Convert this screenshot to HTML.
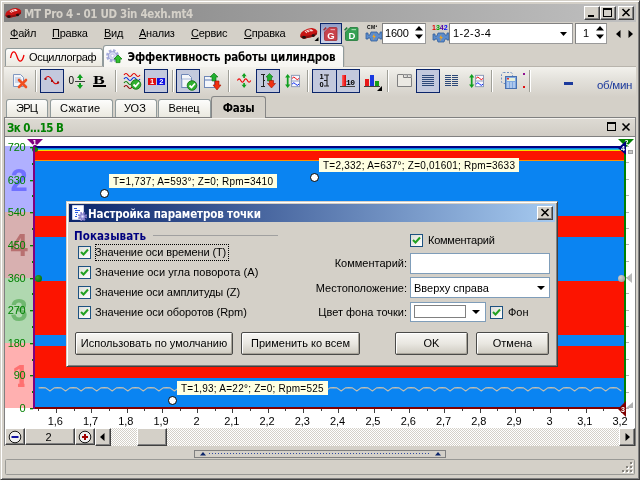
<!DOCTYPE html>
<html><head><meta charset="utf-8"><title>MT Pro 4</title>
<style>
html,body{margin:0;padding:0;}
body{will-change:transform;}
body{width:640px;height:480px;overflow:hidden;background:#d4d0c8;position:relative;font-family:"Liberation Sans",sans-serif;font-size:11px;color:#000;}
.a{position:absolute;}
.t{position:absolute;white-space:nowrap;line-height:14px;height:14px;}
.b{font-family:"DejaVu Sans Condensed","Liberation Sans",sans-serif;font-weight:bold;font-size:11.5px;}
.raised{position:absolute;box-sizing:border-box;background:#d4d0c8;border:1px solid;border-color:#fff #404040 #404040 #fff;box-shadow:inset -1px -1px 0 #808080;}
.sunk{position:absolute;box-sizing:border-box;background:#fff;border:1px solid;border-color:#808080 #9a9a9a #9a9a9a #808080;}
.chk{position:absolute;width:13px;height:13px;box-sizing:border-box;border:1px solid #1c5180;background:linear-gradient(135deg,#dcdcd7,#fff);}
.xpbtn{position:absolute;box-sizing:border-box;border:1px solid #4a4a48;border-radius:2px;background:linear-gradient(#f8f7f4 0%,#e9e7e1 50%,#cfcbc1 100%);text-align:center;line-height:21px;height:23px;box-shadow:inset 1px 1px 0 #fff, inset -1px -1px 0 #a8a49a;}
.sel{position:absolute;box-sizing:border-box;border:1px solid #0a246a;background:#c3c9dd;}
.sep{position:absolute;width:1px;background:#a0a098;box-shadow:1px 0 0 #fff;}
.tab{position:absolute;box-sizing:border-box;border:1px solid #919b9c;border-bottom:none;border-radius:3px 3px 0 0;background:linear-gradient(#fdfdfc,#ebe9e0);}
svg{position:absolute;overflow:visible;}
</style></head><body>
<div class="a" style="left:0;top:0;width:640px;height:480px;box-sizing:border-box;border:1px solid;border-color:#d4d0c8 #404040 #404040 #d4d0c8;box-shadow:inset 1px 1px 0 #fff, inset -1px -1px 0 #808080;"></div>
<div class="a" style="left:4px;top:4px;width:632px;height:18px;background:linear-gradient(90deg,#808080,#c0c0c0);"></div>
<svg style="left:5px;top:7px" width="17" height="13" viewBox="0 0 18 14"><path d="M0.3 7.5 Q1 5 4 3.5 Q8 0.8 12 1 Q16 1.5 17.3 4 L17 7 Q15 9.5 12 10 L5 11.5 Q1 11.5 0.3 9.5Z" fill="#c81414"/><path d="M4.5 4.2 Q8 2 11.5 2.2 L13.5 4 Q9 4.5 6.5 6.2Z" fill="#f4d4d0"/><path d="M6 3.6 L8 6 M8.5 2.8 L10.5 5" stroke="#c81414" stroke-width="0.9"/><path d="M0.5 8.5 Q5 9.5 11 8 L17 5.5 L17 7 Q15 9.5 12 10 L5 11.5 Q1 11.5 0.5 9.5Z" fill="#8c1010"/><ellipse cx="4" cy="10.3" rx="1.9" ry="1.5" fill="#201010"/><ellipse cx="13.3" cy="8.6" rx="1.6" ry="1.4" fill="#201010"/></svg>
<div class="t b" style="left:24px;top:6.5px;color:#d4d0c8;letter-spacing:-0.33px">MT Pro 4 - 01 UD 3in 4exh.mt4</div>
<div class="raised" style="left:584px;top:6px;width:16px;height:14px;"></div>
<div class="raised" style="left:600px;top:6px;width:16px;height:14px;"></div>
<div class="raised" style="left:618px;top:6px;width:16px;height:14px;"></div>
<div class="a" style="left:588px;top:15px;width:6px;height:2px;background:#000"></div>
<div class="a" style="left:603px;top:8px;width:9px;height:9px;box-sizing:border-box;border:1px solid #000;border-top-width:2px"></div>
<svg style="left:622px;top:9px" width="8" height="7" viewBox="0 0 8 7"><path d="M0.5 0 L7.5 7 M7.5 0 L0.5 7" stroke="#000" stroke-width="1.6"/></svg>
<div class="t" style="left:10px;top:26px;letter-spacing:-0.25px"><u>Ф</u>айл</div>
<div class="t" style="left:52px;top:26px;letter-spacing:-0.25px"><u>П</u>равка</div>
<div class="t" style="left:104px;top:26px;letter-spacing:-0.25px"><u>В</u>ид</div>
<div class="t" style="left:139px;top:26px;letter-spacing:-0.25px"><u>А</u>нализ</div>
<div class="t" style="left:191px;top:26px;letter-spacing:-0.25px"><u>С</u>ервис</div>
<div class="t" style="left:244px;top:26px;letter-spacing:-0.25px"><u>С</u>правка</div>
<svg style="left:300px;top:27px" width="18" height="14" viewBox="0 0 18 14"><path d="M0.3 7.5 Q1 5 4 3.5 Q8 0.8 12 1 Q16 1.5 17.3 4 L17 7 Q15 9.5 12 10 L5 11.5 Q1 11.5 0.3 9.5Z" fill="#c81414"/><path d="M4.5 4.2 Q8 2 11.5 2.2 L13.5 4 Q9 4.5 6.5 6.2Z" fill="#f4d4d0"/><path d="M6 3.6 L8 6 M8.5 2.8 L10.5 5" stroke="#c81414" stroke-width="0.9"/><path d="M0.5 8.5 Q5 9.5 11 8 L17 5.5 L17 7 Q15 9.5 12 10 L5 11.5 Q1 11.5 0.5 9.5Z" fill="#8c1010"/><ellipse cx="4" cy="10.3" rx="1.9" ry="1.5" fill="#201010"/><ellipse cx="13.3" cy="8.6" rx="1.6" ry="1.4" fill="#201010"/><path d="M14.5 14 L18.5 14 L18.5 10Z" fill="#000"/></svg>
<div class="sel" style="left:320px;top:23px;width:22px;height:21px;background:linear-gradient(#8f9cc6,#b4bedb 55%,#cdd4e8);"></div>
<svg style="left:323px;top:26px" width="15" height="16" viewBox="0 0 15 16"><path d="M1.5 6 L6 1.5 L13 1.5 Q14 1.5 14 2.5 L14 13.5 Q14 14.5 13 14.5 L2.5 14.5 Q1.5 14.5 1.5 13.5Z" fill="#c8424c" stroke="#a03038" stroke-width="0.8"/><path d="M7.5 3 H12 V4.2 H7.5Z" fill="#e8a0a8"/><path d="M0.6 4.2 L3.2 1.6" stroke="#a03038" stroke-width="1.6"/><text x="8" y="13" font-family="Liberation Sans,sans-serif" font-weight="bold" font-size="9.5" fill="#fff" text-anchor="middle">G</text></svg>
<svg style="left:344px;top:26px" width="15" height="16" viewBox="0 0 15 16"><path d="M1.5 6 L6 1.5 L13 1.5 Q14 1.5 14 2.5 L14 13.5 Q14 14.5 13 14.5 L2.5 14.5 Q1.5 14.5 1.5 13.5Z" fill="#35a052" stroke="#1f7a38" stroke-width="0.8"/><path d="M7.5 3 H12 V4.2 H7.5Z" fill="#9cd8a8"/><path d="M0.6 4.2 L3.2 1.6" stroke="#1f7a38" stroke-width="1.6"/><text x="8" y="13" font-family="Liberation Sans,sans-serif" font-weight="bold" font-size="9.5" fill="#fff" text-anchor="middle">D</text></svg>
<svg style="left:365px;top:30px" width="17" height="12" viewBox="0 0 17 12"><path d="M1 3 L3 3 L3 5 L5 5 L6 2 L12 2 L13 4 L15 4 L15 2 L17 2 L17 9 L15 9 L15 8 L13 8 L12 11 L6 11 L5 8 L3 8 L3 9 L1 9Z" fill="#5c8ccc" stroke="#34609c" stroke-width="0.8"/><path d="M9.3 3.5 L7.3 7 L8.8 7 L7.8 10.5 L10.8 6 L9.3 6Z" fill="#f4a418"/></svg>
<div class="t" style="left:367px;top:20px;font-size:5px;font-weight:bold;letter-spacing:0.3px">CM³</div>
<div class="sunk" style="left:382px;top:23px;width:44px;height:21px;"></div>
<div class="t" style="left:385px;top:26px;font-size:11px;letter-spacing:-0.2px">1600</div>
<svg style="left:415px;top:26px" width="8" height="13" viewBox="0 0 8 13"><path d="M4 0 L8 4.5 L0 4.5Z M0 8.5 L8 8.5 L4 13Z" fill="#000"/></svg>
<svg style="left:432px;top:31px" width="17" height="12" viewBox="0 0 17 12"><path d="M1 3 L3 3 L3 5 L5 5 L6 2 L12 2 L13 4 L15 4 L15 2 L17 2 L17 9 L15 9 L15 8 L13 8 L12 11 L6 11 L5 8 L3 8 L3 9 L1 9Z" fill="#5c8ccc" stroke="#34609c" stroke-width="0.8"/><path d="M9.3 3.5 L7.3 7 L8.8 7 L7.8 10.5 L10.8 6 L9.3 6Z" fill="#f4a418"/></svg>
<div class="t" style="left:432px;top:21px;font-size:7px;font-weight:bold;"><span style="color:#e00000">1</span><span style="color:#00a000">3</span><span style="color:#5000a0">4</span><span style="color:#0000ff">2</span></div>
<div class="sunk" style="left:449px;top:23px;width:124px;height:21px;"></div>
<div class="t" style="left:453px;top:26px;letter-spacing:0.4px">1-2-3-4</div>
<svg style="left:560px;top:32px" width="7" height="4" viewBox="0 0 7 4"><path d="M0 0 L7 0 L3.5 4Z" fill="#000"/></svg>
<div class="sunk" style="left:575px;top:23px;width:32px;height:21px;"></div>
<div class="t" style="left:583px;top:26px;font-size:11px;">1</div>
<svg style="left:596px;top:26px" width="8" height="13" viewBox="0 0 8 13"><path d="M4 0 L8 4.5 L0 4.5Z M0 8.5 L8 8.5 L4 13Z" fill="#000"/></svg>
<svg style="left:616px;top:30px" width="18" height="8" viewBox="0 0 18 8"><path d="M4.5 0 L4.5 8 L0 4Z M12.5 0 L17 4 L12.5 8Z" fill="#000"/></svg>
<div class="a" style="left:4px;top:66px;width:632px;height:30px;background:linear-gradient(#f2f1ec,#e4e2dc 40%,#d4d0c8);border-top:1px solid #b8b4ac;"></div>
<div class="tab" style="left:5px;top:48px;width:98px;height:18px;"></div>
<svg style="left:10px;top:51px" width="15" height="11" viewBox="0 0 15 11"><path d="M0.5 7 C2 -1,5 -1,7 5.5 S12 12,14 4" stroke="#f00000" stroke-width="1.3" fill="none"/></svg>
<div class="t" style="left:29px;top:50px;font-size:11px;letter-spacing:-0.33px">Осциллограф</div>
<div class="tab" style="left:103px;top:45px;width:241px;height:22px;background:linear-gradient(#fefefe,#f6f5f1);box-shadow:1px 0 0 #c8c4bc;"></div>
<svg style="left:106px;top:49px" width="17" height="15" viewBox="0 0 17 15"><circle cx="6.5" cy="6.8" r="5" fill="none" stroke="#a8aede" stroke-width="3" stroke-dasharray="2.4 1.5"/><circle cx="6.5" cy="6.8" r="4.2" fill="#d4d8f2" stroke="#9aa0d4" stroke-width="1"/><circle cx="6.5" cy="6.8" r="1.6" fill="#fff" stroke="#a8aede" stroke-width="0.6"/><path d="M12 6 L16 10 L14 10 L14 13.6 L10 13.6 L10 10 L8 10Z" fill="#30c030" stroke="#108010" stroke-width="0.8"/></svg>
<div class="t b" style="left:127.5px;top:49.5px;letter-spacing:-0.15px">Эффективность работы цилиндров</div>
<div class="sep" style="left:35px;top:70px;height:22px;"></div>
<div class="sep" style="left:115px;top:70px;height:22px;"></div>
<div class="sep" style="left:172px;top:70px;height:22px;"></div>
<div class="sep" style="left:228px;top:70px;height:22px;"></div>
<div class="sep" style="left:307px;top:70px;height:22px;"></div>
<div class="sep" style="left:387px;top:70px;height:22px;"></div>
<div class="sep" style="left:491px;top:70px;height:22px;"></div>
<div class="sep" style="left:529px;top:70px;height:22px;"></div>
<div class="sel" style="left:40px;top:69px;width:24px;height:24px;"></div>
<div class="sel" style="left:144px;top:69px;width:24px;height:24px;"></div>
<div class="sel" style="left:176px;top:69px;width:24px;height:24px;"></div>
<div class="sel" style="left:256px;top:69px;width:24px;height:24px;"></div>
<div class="sel" style="left:312px;top:69px;width:25px;height:24px;"></div>
<div class="sel" style="left:336px;top:69px;width:24px;height:24px;"></div>
<div class="sel" style="left:416px;top:69px;width:24px;height:24px;"></div>
<svg style="left:12px;top:73px" width="16" height="16" viewBox="0 0 16 16"><path d="M1.5 1.5 L8.5 1.5 L11.5 4.5 L11.5 13.5 L1.5 13.5Z" fill="#f4f6fa" stroke="#8098c0"/><path d="M3 5H9M3 7H10M3 9H10" stroke="#a8b8d8"/><path d="M7 7 L14 14 M14 7 L7 14" stroke="#f05020" stroke-width="2.6" stroke-linecap="round"/></svg>
<svg style="left:44px;top:75px" width="16" height="12" viewBox="0 0 16 12"><path d="M1 4 C3 0,6 1,8 5 S12 10,15 7" stroke="#e00000" stroke-width="1.1" fill="none"/><rect x="0.5" y="3" width="2" height="2" fill="#a01010"/><rect x="7" y="5" width="2" height="2" fill="#a01010"/><rect x="13" y="6.5" width="2" height="2" fill="#a01010"/></svg>
<div class="t" style="left:68.5px;top:74px;font-size:10px;">0</div>
<svg style="left:75px;top:74px" width="10" height="15" viewBox="0 0 10 15"><path d="M5 0 L8 4 L6 4 L6 6 L4 6 L4 4 L2 4Z M5 15 L8 11 L6 11 L6 9 L4 9 L4 11 L2 11Z" fill="#10a020"/><path d="M0 7.5 H10" stroke="#404040"/></svg>
<div class="t" style="left:93px;top:72px;font-family:'Liberation Serif',serif;font-weight:bold;font-size:13.5px;line-height:16px;transform:scaleX(1.3);transform-origin:0 0;">B</div>
<div class="a" style="left:93px;top:85px;width:13px;height:2px;background:#000"></div>
<svg style="left:124px;top:72px" width="17" height="18" viewBox="0 0 17 18"><path d="M0 3 Q2 0,4 3 T8 3 T12 3 T16 3" stroke="#e00000" stroke-width="1.2" fill="none"/><path d="M0 7 Q2 4,4 7 T8 7 T12 7 T16 7" stroke="#0030e0" stroke-width="1.2" fill="none"/><path d="M0 11 Q2 8,4 11 T8 11" stroke="#108010" stroke-width="1.2" fill="none"/><path d="M0 15 Q2 12,4 15 T8 15" stroke="#900000" stroke-width="1.2" fill="none"/><circle cx="12" cy="12.5" r="4.8" fill="#30b030" stroke="#107010" stroke-width="0.8"/><path d="M9.5 12.5 L11.5 14.5 L15 10.5" stroke="#fff" stroke-width="1.8" fill="none"/></svg>
<div class="a" style="left:148px;top:78px;width:8px;height:7px;background:#e01010"></div><div class="a" style="left:157px;top:78px;width:8px;height:7px;background:#1010e0"></div>
<div class="t" style="left:148px;top:74.5px;font-size:7.5px;font-weight:bold;color:#fff;letter-spacing:5px;padding-left:2px">12</div>
<svg style="left:180px;top:73px" width="18" height="18" viewBox="0 0 18 18"><path d="M1.5 1.5 L8.5 1.5 L11.5 4.5 L11.5 14.5 L1.5 14.5Z" fill="#f4f6fa" stroke="#7088b8"/><path d="M2 6H11M2 6V14" stroke="#a8b8d8" stroke-width="1"/><circle cx="12" cy="12.5" r="4.8" fill="#30b030" stroke="#107010" stroke-width="0.8"/><path d="M9.5 12.5 L11.5 14.5 L15 10.5" stroke="#fff" stroke-width="1.8" fill="none"/></svg>
<svg style="left:204px;top:73px" width="17" height="18" viewBox="0 0 17 18"><rect x="0.5" y="3.5" width="10" height="11" fill="#f4f6fa" stroke="#7088b8"/><path d="M1 7H10" stroke="#a8b8d8" stroke-width="2"/><path d="M10 0 L14 4 L12 4 L12 8 L8 8 L8 4 L6 4Z" fill="#20b030" stroke="#107010" stroke-width="0.6"/><path d="M13 17 L17 12 L15 12 L15 8 L11 8 L11 12 L9 12Z" fill="#f03010" stroke="#a01000" stroke-width="0.6"/></svg>
<svg style="left:237px;top:73px" width="15" height="15" viewBox="0 0 17 18"><path d="M0 9 Q2 5,4 9 T8 9 T12 9 T16 9" stroke="#f00000" stroke-width="1.3" fill="none"/><path d="M8 0 L11 4 L9 4 L9 6 L7 6 L7 4 L5 4Z M8 18 L11 14 L9 14 L9 12 L7 12 L7 14 L5 14Z" fill="#10a020"/></svg>
<svg style="left:260px;top:73px" width="17" height="16" viewBox="0 0 17 16"><path d="M1 1.5H5M1 13.5H5M3.5 1.5V13.5M3.5 7.5H5" stroke="#202020" stroke-width="1" fill="none"/><path d="M9.5 0.5 L13 4 L11.5 4 L11.5 8 L7.5 8 L7.5 4 L6 4Z" fill="#20b030" stroke="#107010" stroke-width="0.6"/><path d="M11.5 15 L15.5 10.5 L13.5 10.5 L13.5 7.5 L9.5 7.5 L9.5 10.5 L7.5 10.5Z" fill="#f03010" stroke="#a01000" stroke-width="0.6"/></svg>
<svg style="left:284px;top:74px" width="17" height="14" viewBox="0 0 17 16"><path d="M3 0 L6 4 L4 4 L4 12 L6 12 L3 16 L0 12 L2 12 L2 4 L0 4Z" fill="#10a020"/><rect x="7.5" y="1.5" width="9" height="13" fill="#f8f8ff" stroke="#8090b0"/><path d="M8 8H16" stroke="#8090b0"/><path d="M8 5 Q10 2,12 5 T16 5" stroke="#f00000" stroke-width="1.1" fill="none"/><path d="M8 11.5 Q10 8.5,12 11.5 T16 11.5" stroke="#0020f0" stroke-width="1.1" fill="none"/></svg>
<div class="t" style="left:319.5px;top:71px;font-size:7.5px;font-weight:bold;line-height:7.5px;height:18px;padding-top:2px">1<br>0</div>
<svg style="left:324px;top:74px" width="6" height="13" viewBox="0 0 6 13"><path d="M0 1H5M0 12H5M3 1V12M0 6.5H3" stroke="#202020" stroke-width="1.1" fill="none"/></svg>
<div class="a" style="left:342px;top:75px;width:4px;height:11px;background:linear-gradient(90deg,#ff6060,#e00000)"></div>
<div class="a" style="left:340px;top:86px;width:15px;height:1px;background:#404040"></div>
<div class="t" style="left:346px;top:76px;font-size:8px;font-weight:bold;font-family:'Liberation Mono',monospace;letter-spacing:-0.5px">10</div>
<div class="a" style="left:365px;top:79px;width:4px;height:7px;background:#e81818"></div><div class="a" style="left:370px;top:75px;width:4px;height:11px;background:#1838e0"></div><div class="a" style="left:375px;top:81px;width:4px;height:5px;background:#18a018"></div><div class="a" style="left:364px;top:86px;width:16px;height:1px;background:#404040"></div>
<svg style="left:377px;top:86px" width="5" height="5" viewBox="0 0 5 5"><path d="M5 0 L5 5 L0 5Z" fill="#000"/></svg>
<svg style="left:397px;top:74px" width="15" height="13" viewBox="0 0 15 13"><path d="M0.5 12.5 V1 Q0.5 0.5 1 0.5 H6.5 V3.5 H14.5 V12.5Z" fill="#ebe9e3" stroke="#808080"/><path d="M6.5 0.5 H10.5 V3.5 M10.5 0.5 H14 Q14.5 0.5 14.5 1 V3.5" stroke="#909090" fill="#c8c8c8"/></svg>
<svg style="left:422px;top:75px" width="12" height="12" viewBox="0 0 12 12"><path d="M0 0.5H12M0 2.5H12M0 4.5H12M0 6.5H12M0 8.5H12M0 10.5H12" stroke="#2c4878" stroke-width="1.1"/></svg>
<svg style="left:445px;top:75px" width="13" height="12" viewBox="0 0 13 12"><path d="M0 0.5H6M0 2.5H6M0 4.5H6M0 6.5H6M0 8.5H6M0 10.5H6M7 0.5H13M7 2.5H13M7 4.5H13M7 6.5H13M7 8.5H13M7 10.5H13" stroke="#2c4878" stroke-width="1.1"/></svg>
<svg style="left:468px;top:74px" width="17" height="14" viewBox="0 0 17 16"><path d="M3 0 L6 4 L4 4 L4 12 L6 12 L3 16 L0 12 L2 12 L2 4 L0 4Z" fill="#10a020"/><rect x="7.5" y="1.5" width="9" height="13" fill="#f8f8ff" stroke="#8090b0"/><path d="M8 8H16" stroke="#8090b0"/><path d="M8 5 Q10 2,12 5 T16 5" stroke="#f00000" stroke-width="1.1" fill="none"/><path d="M8 11.5 Q10 8.5,12 11.5 T16 11.5" stroke="#0020f0" stroke-width="1.1" fill="none"/></svg>
<svg style="left:501px;top:72px" width="17" height="18" viewBox="0 0 17 18"><rect x="0.5" y="0.5" width="11" height="11" rx="2" fill="none" stroke="#7090c0" stroke-dasharray="2 1.5"/><rect x="4.5" y="4.5" width="11" height="12" fill="#80a8e0" stroke="#4870b0"/><rect x="6" y="6" width="8" height="3" fill="#e8f0d8"/><path d="M6 11H14M6 13H14M6 15H14" stroke="#dce8f8" stroke-width="1.2" stroke-dasharray="2 1"/><rect x="6" y="6" width="2" height="1.5" fill="#e03030"/></svg>
<div class="a" style="left:523px;top:73px;width:2px;height:2px;background:#901090"></div><div class="a" style="left:523px;top:86px;width:2px;height:2px;background:#e01010"></div>
<div class="a" style="left:564px;top:82px;width:9px;height:3px;background:#1c3a9c"></div>
<div class="t" style="left:597px;top:78px;color:#1c3a9c;font-size:11.5px;letter-spacing:-0.3px">об/мин</div>
<div class="tab" style="left:6px;top:99px;width:42px;height:18px;"></div>
<div class="t" style="left:16px;top:100.5px;font-size:11px;letter-spacing:-0.7px">ЭРЦ</div>
<div class="tab" style="left:50px;top:99px;width:63px;height:18px;"></div>
<div class="t" style="left:60px;top:100.5px;font-size:11px;letter-spacing:0.3px">Сжатие</div>
<div class="tab" style="left:115px;top:99px;width:42px;height:18px;"></div>
<div class="t" style="left:124px;top:100.5px;font-size:11px;letter-spacing:0px">УОЗ</div>
<div class="tab" style="left:158px;top:99px;width:53px;height:18px;"></div>
<div class="t" style="left:168.5px;top:100.5px;font-size:11px;letter-spacing:-0.2px">Венец</div>
<div class="tab" style="left:211px;top:96px;width:55px;height:22px;background:#d4d0c8;border-color:#868686;"></div>
<div class="t b" style="left:211px;width:55px;top:100.5px;text-align:center;letter-spacing:-0.25px">Фазы</div>
<div class="a" style="left:4px;top:117px;width:632px;height:20px;box-sizing:border-box;background:linear-gradient(#dedbd4,#d0ccc4);border:1px solid #808080;box-shadow:inset 0 1px 0 #f4f2ee;"></div>
<div class="a" style="left:212px;top:117px;width:53px;height:1px;background:#d4d0c8"></div>
<div class="t b" style="left:7px;top:121px;color:#008000;letter-spacing:-0.6px">Зк 0...15 В</div>
<div class="a" style="left:607px;top:122px;width:9px;height:9px;box-sizing:border-box;border:1px solid #000;border-top-width:2px"></div>
<svg style="left:622px;top:123px" width="8" height="8" viewBox="0 0 8 8"><path d="M0.5 0.5 L7.5 7.5 M7.5 0.5 L0.5 7.5" stroke="#000" stroke-width="1.6"/></svg>
<div class="a" style="left:4px;top:137px;width:632px;height:291px;background:#fff;border-left:1px solid #808080;border-right:1px solid #808080;box-sizing:border-box"></div>
<div class="a" style="left:5px;top:146px;width:28px;height:66px;background:#b0b0ff"></div>
<div class="a" style="left:5px;top:212px;width:28px;height:66px;background:#d8b0b0"></div>
<div class="a" style="left:5px;top:278px;width:28px;height:65px;background:#b0d8b0"></div>
<div class="a" style="left:5px;top:343px;width:28px;height:65px;background:#ffb0b0"></div>
<div class="t" style="left:5px;width:28px;text-align:center;top:162.5px;font-size:31px;line-height:36px;height:36px;font-weight:bold;color:#7070ff;">2</div>
<div class="t" style="left:5px;width:28px;text-align:center;top:227.5px;font-size:31px;line-height:36px;height:36px;font-weight:bold;color:#b87070;">4</div>
<div class="t" style="left:5px;width:28px;text-align:center;top:292.5px;font-size:31px;line-height:36px;height:36px;font-weight:bold;color:#70b870;">3</div>
<div class="t" style="left:7px;width:28px;text-align:center;top:357.5px;font-size:32px;line-height:36px;height:36px;font-weight:bold;color:#ff7070;clip-path:polygon(0 0,100% 0,100% 25px,17.5px 25px,17.5px 100%,11px 100%,11px 25px,0 25px);">1</div>
<div class="a" style="left:35px;top:146px;width:589px;height:2px;background:#000080"></div>
<div class="a" style="left:35px;top:148px;width:589px;height:2px;background:#0a84f2"></div>
<div class="a" style="left:35px;top:150px;width:589px;height:1px;background:#f0e000"></div>
<div class="a" style="left:35px;top:151px;width:589px;height:9px;background:#fc1400"></div>
<div class="a" style="left:35px;top:160px;width:589px;height:1px;background:#ff9000"></div>
<div class="a" style="left:35px;top:161px;width:589px;height:55px;background:#0a84f2"></div>
<div class="a" style="left:35px;top:216px;width:589px;height:21px;background:#fc1400"></div>
<div class="a" style="left:35px;top:237px;width:589px;height:44px;background:#0a84f2"></div>
<div class="a" style="left:35px;top:281px;width:589px;height:54px;background:#fc1400"></div>
<div class="a" style="left:35px;top:335px;width:589px;height:11px;background:#0a84f2"></div>
<div class="a" style="left:35px;top:346px;width:589px;height:32px;background:#fc1400"></div>
<div class="a" style="left:35px;top:378px;width:589px;height:29px;background:#0a84f2"></div>
<div class="a" style="left:35px;top:407px;width:589px;height:2px;background:#800000"></div>
<div class="a" style="left:35px;top:149px;width:589px;height:1px;background:#30c0c0"></div>
<div class="a" style="left:32px;top:147px;width:6px;height:5px;border-radius:50%;background:#108010"></div>
<div class="a" style="left:33px;top:146px;width:2px;height:263px;background:#800080"></div>
<div class="a" style="left:624px;top:146px;width:2px;height:262px;background:#008000"></div>
<div class="t" style="left:0;width:25.5px;text-align:right;top:140.0px;color:#008000;font-size:11px;letter-spacing:-0.2px">720</div>
<div class="a" style="left:30px;top:147px;width:3px;height:1px;background:#008000;box-shadow:0 1px 0 rgba(0,128,0,.35)"></div>
<div class="a" style="left:32px;top:163px;width:1px;height:2px;background:#008000"></div>
<div class="t" style="left:0;width:25.5px;text-align:right;top:172.6px;color:#008000;font-size:11px;letter-spacing:-0.2px">630</div>
<div class="a" style="left:30px;top:180px;width:3px;height:1px;background:#008000;box-shadow:0 1px 0 rgba(0,128,0,.35)"></div>
<div class="a" style="left:32px;top:195px;width:1px;height:2px;background:#008000"></div>
<div class="t" style="left:0;width:25.5px;text-align:right;top:205.2px;color:#008000;font-size:11px;letter-spacing:-0.2px">540</div>
<div class="a" style="left:30px;top:212px;width:3px;height:1px;background:#008000;box-shadow:0 1px 0 rgba(0,128,0,.35)"></div>
<div class="a" style="left:32px;top:228px;width:1px;height:2px;background:#008000"></div>
<div class="t" style="left:0;width:25.5px;text-align:right;top:237.9px;color:#008000;font-size:11px;letter-spacing:-0.2px">450</div>
<div class="a" style="left:30px;top:245px;width:3px;height:1px;background:#008000;box-shadow:0 1px 0 rgba(0,128,0,.35)"></div>
<div class="a" style="left:32px;top:261px;width:1px;height:2px;background:#008000"></div>
<div class="t" style="left:0;width:25.5px;text-align:right;top:270.5px;color:#008000;font-size:11px;letter-spacing:-0.2px">360</div>
<div class="a" style="left:30px;top:278px;width:3px;height:1px;background:#008000;box-shadow:0 1px 0 rgba(0,128,0,.35)"></div>
<div class="a" style="left:32px;top:293px;width:1px;height:2px;background:#008000"></div>
<div class="t" style="left:0;width:25.5px;text-align:right;top:303.1px;color:#008000;font-size:11px;letter-spacing:-0.2px">270</div>
<div class="a" style="left:30px;top:310px;width:3px;height:1px;background:#008000;box-shadow:0 1px 0 rgba(0,128,0,.35)"></div>
<div class="a" style="left:32px;top:326px;width:1px;height:2px;background:#008000"></div>
<div class="t" style="left:0;width:25.5px;text-align:right;top:335.8px;color:#008000;font-size:11px;letter-spacing:-0.2px">180</div>
<div class="a" style="left:30px;top:343px;width:3px;height:1px;background:#008000;box-shadow:0 1px 0 rgba(0,128,0,.35)"></div>
<div class="a" style="left:32px;top:359px;width:1px;height:2px;background:#008000"></div>
<div class="t" style="left:0;width:25.5px;text-align:right;top:368.4px;color:#008000;font-size:11px;letter-spacing:-0.2px">90</div>
<div class="a" style="left:30px;top:375px;width:3px;height:1px;background:#008000;box-shadow:0 1px 0 rgba(0,128,0,.35)"></div>
<div class="a" style="left:32px;top:391px;width:1px;height:2px;background:#008000"></div>
<div class="t" style="left:0;width:25.5px;text-align:right;top:401.0px;color:#008000;font-size:11px;letter-spacing:-0.2px">0</div>
<div class="a" style="left:30px;top:408px;width:3px;height:1px;background:#008000;box-shadow:0 1px 0 rgba(0,128,0,.35)"></div>
<div class="a" style="left:626px;top:146px;width:3px;height:1px;background:#b0b0b0"></div>
<div class="a" style="left:626px;top:162px;width:3px;height:1px;background:#b0b0b0"></div>
<div class="a" style="left:626px;top:179px;width:3px;height:1px;background:#b0b0b0"></div>
<div class="a" style="left:626px;top:195px;width:3px;height:1px;background:#b0b0b0"></div>
<div class="a" style="left:626px;top:212px;width:3px;height:1px;background:#b0b0b0"></div>
<div class="a" style="left:626px;top:228px;width:3px;height:1px;background:#b0b0b0"></div>
<div class="a" style="left:626px;top:244px;width:3px;height:1px;background:#b0b0b0"></div>
<div class="a" style="left:626px;top:261px;width:3px;height:1px;background:#b0b0b0"></div>
<div class="a" style="left:626px;top:277px;width:3px;height:1px;background:#b0b0b0"></div>
<div class="a" style="left:626px;top:293px;width:3px;height:1px;background:#b0b0b0"></div>
<div class="a" style="left:626px;top:310px;width:3px;height:1px;background:#b0b0b0"></div>
<div class="a" style="left:626px;top:326px;width:3px;height:1px;background:#b0b0b0"></div>
<div class="a" style="left:626px;top:342px;width:3px;height:1px;background:#b0b0b0"></div>
<div class="a" style="left:626px;top:359px;width:3px;height:1px;background:#b0b0b0"></div>
<div class="a" style="left:626px;top:375px;width:3px;height:1px;background:#b0b0b0"></div>
<div class="a" style="left:626px;top:392px;width:3px;height:1px;background:#b0b0b0"></div>
<div class="a" style="left:626px;top:408px;width:3px;height:1px;background:#b0b0b0"></div>
<svg style="left:0;top:0" width="640" height="480" viewBox="0 0 640 480"><path d="M38.6 387.9 L41.9 387.6 L45.6 387.9 L50.0 391.0 L50.0 391.0 L54.2 387.9 L57.5 387.6 L61.2 387.9 L65.6 391.0 L65.6 391.0 L69.8 387.9 L73.1 387.6 L76.8 387.9 L81.1 391.0 L81.1 391.0 L85.3 387.9 L88.6 387.6 L92.3 387.9 L96.7 391.0 L96.7 391.0 L100.9 387.9 L104.2 387.6 L107.9 387.9 L112.2 391.0 L112.2 391.0 L116.4 387.9 L119.7 387.6 L123.4 387.9 L127.8 391.0 L127.8 391.0 L132.0 387.9 L135.3 387.6 L139.0 387.9 L143.3 391.0 L143.3 391.0 L147.5 387.9 L150.8 387.6 L154.5 387.9 L158.9 391.0 L158.9 391.0 L163.1 387.9 L166.4 387.6 L170.1 387.9 L174.4 391.0 L174.4 391.0 L178.6 387.9 L181.9 387.6 M325.7 391.0 L325.7 391.0 L329.9 387.9 L333.2 387.6 L336.9 387.9 L341.2 391.0 L341.2 391.0 L345.4 387.9 L348.8 387.6 L352.4 387.9 L356.8 391.0 L356.8 391.0 L361.0 387.9 L364.3 387.6 L368.0 387.9 L372.4 391.0 L372.4 391.0 L376.6 387.9 L379.9 387.6 L383.6 387.9 L387.9 391.0 L387.9 391.0 L392.1 387.9 L395.4 387.6 L399.1 387.9 L403.5 391.0 L403.5 391.0 L407.7 387.9 L411.0 387.6 L414.7 387.9 L419.0 391.0 L419.0 391.0 L423.2 387.9 L426.5 387.6 L430.2 387.9 L434.6 391.0 L434.6 391.0 L438.8 387.9 L442.1 387.6 L445.8 387.9 L450.1 391.0 L450.1 391.0 L454.3 387.9 L457.6 387.6 L461.3 387.9 L465.7 391.0 L465.7 391.0 L469.9 387.9 L473.2 387.6 L476.9 387.9 L481.3 391.0 L481.3 391.0 L485.5 387.9 L488.8 387.6 L492.5 387.9 L496.8 391.0 L496.8 391.0 L501.0 387.9 L504.3 387.6 L508.0 387.9 L512.4 391.0 L512.4 391.0 L516.6 387.9 L519.9 387.6 L523.6 387.9 L527.9 391.0 L527.9 391.0 L532.1 387.9 L535.4 387.6 L539.1 387.9 L543.5 391.0 L543.5 391.0 L547.7 387.9 L551.0 387.6 L554.7 387.9 L559.0 391.0 L559.0 391.0 L563.2 387.9 L566.5 387.6 L570.2 387.9 L574.6 391.0 L574.6 391.0 L578.8 387.9 L582.1 387.6 L585.8 387.9 L590.1 391.0 L590.1 391.0 L594.3 387.9 L597.6 387.6 L601.3 387.9 L605.7 391.0 L605.7 391.0 L609.9 387.9 L613.2 387.6 L616.9 387.9 L621.3 391.0 L621.3 391.0" stroke="#c2beb0" stroke-width="1.15" fill="none" stroke-linejoin="round"/></svg>
<div class="a" style="left:38px;top:409px;width:1px;height:2px;background:#404040"></div>
<div class="a" style="left:56px;top:409px;width:1px;height:4px;background:#404040"></div>
<div class="a" style="left:74px;top:409px;width:1px;height:2px;background:#404040"></div>
<div class="a" style="left:91px;top:409px;width:1px;height:4px;background:#404040"></div>
<div class="a" style="left:109px;top:409px;width:1px;height:2px;background:#404040"></div>
<div class="a" style="left:127px;top:409px;width:1px;height:4px;background:#404040"></div>
<div class="a" style="left:144px;top:409px;width:1px;height:2px;background:#404040"></div>
<div class="a" style="left:162px;top:409px;width:1px;height:4px;background:#404040"></div>
<div class="a" style="left:180px;top:409px;width:1px;height:2px;background:#404040"></div>
<div class="a" style="left:197px;top:409px;width:1px;height:4px;background:#404040"></div>
<div class="a" style="left:215px;top:409px;width:1px;height:2px;background:#404040"></div>
<div class="a" style="left:232px;top:409px;width:1px;height:4px;background:#404040"></div>
<div class="a" style="left:250px;top:409px;width:1px;height:2px;background:#404040"></div>
<div class="a" style="left:268px;top:409px;width:1px;height:4px;background:#404040"></div>
<div class="a" style="left:285px;top:409px;width:1px;height:2px;background:#404040"></div>
<div class="a" style="left:303px;top:409px;width:1px;height:4px;background:#404040"></div>
<div class="a" style="left:321px;top:409px;width:1px;height:2px;background:#404040"></div>
<div class="a" style="left:338px;top:409px;width:1px;height:4px;background:#404040"></div>
<div class="a" style="left:356px;top:409px;width:1px;height:2px;background:#404040"></div>
<div class="a" style="left:374px;top:409px;width:1px;height:4px;background:#404040"></div>
<div class="a" style="left:391px;top:409px;width:1px;height:2px;background:#404040"></div>
<div class="a" style="left:409px;top:409px;width:1px;height:4px;background:#404040"></div>
<div class="a" style="left:427px;top:409px;width:1px;height:2px;background:#404040"></div>
<div class="a" style="left:444px;top:409px;width:1px;height:4px;background:#404040"></div>
<div class="a" style="left:462px;top:409px;width:1px;height:2px;background:#404040"></div>
<div class="a" style="left:480px;top:409px;width:1px;height:4px;background:#404040"></div>
<div class="a" style="left:497px;top:409px;width:1px;height:2px;background:#404040"></div>
<div class="a" style="left:515px;top:409px;width:1px;height:4px;background:#404040"></div>
<div class="a" style="left:533px;top:409px;width:1px;height:2px;background:#404040"></div>
<div class="a" style="left:550px;top:409px;width:1px;height:4px;background:#404040"></div>
<div class="a" style="left:568px;top:409px;width:1px;height:2px;background:#404040"></div>
<div class="a" style="left:586px;top:409px;width:1px;height:4px;background:#404040"></div>
<div class="a" style="left:603px;top:409px;width:1px;height:2px;background:#404040"></div>
<div class="a" style="left:621px;top:409px;width:1px;height:4px;background:#404040"></div>
<div class="t" style="left:35.2px;width:40px;text-align:center;top:414px;font-size:11px;letter-spacing:-0.1px">1,6</div>
<div class="t" style="left:70.5px;width:40px;text-align:center;top:414px;font-size:11px;letter-spacing:-0.1px">1,7</div>
<div class="t" style="left:105.8px;width:40px;text-align:center;top:414px;font-size:11px;letter-spacing:-0.1px">1,8</div>
<div class="t" style="left:141.1px;width:40px;text-align:center;top:414px;font-size:11px;letter-spacing:-0.1px">1,9</div>
<div class="t" style="left:176.4px;width:40px;text-align:center;top:414px;font-size:11px;letter-spacing:-0.1px">2</div>
<div class="t" style="left:211.7px;width:40px;text-align:center;top:414px;font-size:11px;letter-spacing:-0.1px">2,1</div>
<div class="t" style="left:247.0px;width:40px;text-align:center;top:414px;font-size:11px;letter-spacing:-0.1px">2,2</div>
<div class="t" style="left:282.3px;width:40px;text-align:center;top:414px;font-size:11px;letter-spacing:-0.1px">2,3</div>
<div class="t" style="left:317.6px;width:40px;text-align:center;top:414px;font-size:11px;letter-spacing:-0.1px">2,4</div>
<div class="t" style="left:352.9px;width:40px;text-align:center;top:414px;font-size:11px;letter-spacing:-0.1px">2,5</div>
<div class="t" style="left:388.2px;width:40px;text-align:center;top:414px;font-size:11px;letter-spacing:-0.1px">2,6</div>
<div class="t" style="left:423.5px;width:40px;text-align:center;top:414px;font-size:11px;letter-spacing:-0.1px">2,7</div>
<div class="t" style="left:458.8px;width:40px;text-align:center;top:414px;font-size:11px;letter-spacing:-0.1px">2,8</div>
<div class="t" style="left:494.1px;width:40px;text-align:center;top:414px;font-size:11px;letter-spacing:-0.1px">2,9</div>
<div class="t" style="left:529.4px;width:40px;text-align:center;top:414px;font-size:11px;letter-spacing:-0.1px">3</div>
<div class="t" style="left:564.7px;width:40px;text-align:center;top:414px;font-size:11px;letter-spacing:-0.1px">3,1</div>
<div class="t" style="left:600.0px;width:40px;text-align:center;top:414px;font-size:11px;letter-spacing:-0.1px">3,2</div>
<svg style="left:27px;top:139px" width="16" height="8" viewBox="0 0 16 8"><path d="M0 0 L16 0 L8 8Z" fill="#800080"/><text x="7.5" y="6.3" font-size="7.5" font-weight="bold" font-family="Liberation Sans,sans-serif" fill="#fff" text-anchor="middle">1</text></svg>
<svg style="left:618px;top:139px" width="16" height="8" viewBox="0 0 16 8"><path d="M0 0 L16 0 L8 8Z" fill="#008000"/><text x="8.5" y="6" font-size="7" font-weight="bold" font-family="Liberation Sans,sans-serif" fill="#fff" text-anchor="middle">2</text></svg>
<svg style="left:618px;top:141px" width="8" height="14" viewBox="0 0 8 14"><path d="M8 0 L8 14 L0 7Z" fill="#000080"/><text x="5" y="9.5" font-size="7" font-weight="bold" font-family="Liberation Sans,sans-serif" fill="#fff" text-anchor="middle">4</text></svg>
<svg style="left:618px;top:401px" width="8" height="16" viewBox="0 0 8 16"><path d="M8 0 L8 16 L0 8Z" fill="#800000"/><text x="5" y="10.5" font-size="7" font-weight="bold" font-family="Liberation Sans,sans-serif" fill="#fff" text-anchor="middle">3</text></svg>
<div class="a" style="left:35px;top:275px;width:7px;height:7px;border-radius:50%;background:radial-gradient(circle at 35% 35%,#30a030,#006000)"></div>
<div class="a" style="left:618px;top:275px;width:7px;height:7px;border-radius:50%;background:radial-gradient(circle at 35% 35%,#d0d0d0,#909090)"></div>
<svg style="left:626px;top:273px" width="6" height="10" viewBox="0 0 6 10"><path d="M6 0 L6 10 L0 5Z" fill="#b8b8b8"/></svg>
<svg style="left:626px;top:402px" width="7" height="6" viewBox="0 0 7 6"><path d="M7 0 L7 6 L0 6Z" fill="#b0b0b0"/></svg>
<div class="a" style="left:628px;top:150px;width:5px;height:4px;background:#c8c8c8;border:1px solid #a0a0a0;box-sizing:border-box"></div>
<div class="a" style="left:109px;top:174px;width:168px;height:14px;background:#ffffe1;"></div>
<div class="t" style="left:113px;top:174.5px;font-size:10px;letter-spacing:0.24px">T=1,737; A=593°; Z=0; Rpm=3410</div>
<div class="a" style="left:319px;top:158px;width:200px;height:14px;background:#ffffe1;"></div>
<div class="t" style="left:323px;top:158.5px;font-size:10px;letter-spacing:0.24px">T=2,332; A=637°; Z=0,01601; Rpm=3633</div>
<div class="a" style="left:177px;top:381px;width:151px;height:14px;background:#ffffe1;"></div>
<div class="t" style="left:181px;top:381.5px;font-size:10px;letter-spacing:0.24px">T=1,93; A=22°; Z=0; Rpm=525</div>
<div class="a" style="left:100px;top:189px;width:9px;height:9px;box-sizing:border-box;border:1px solid #000;border-radius:50%;background:#fff"></div>
<div class="a" style="left:310px;top:173px;width:9px;height:9px;box-sizing:border-box;border:1px solid #000;border-radius:50%;background:#fff"></div>
<div class="a" style="left:168px;top:396px;width:9px;height:9px;box-sizing:border-box;border:1px solid #000;border-radius:50%;background:#fff"></div>
<div class="a" style="left:4px;top:428px;width:632px;height:18px;background:#d4d0c8;border-left:1px solid #808080;border-right:1px solid #808080;box-sizing:border-box"></div>
<div class="a" style="left:111px;top:428px;width:508px;height:18px;background-color:#fff;background-image:linear-gradient(45deg,#d4d0c8 25%,transparent 25%,transparent 75%,#d4d0c8 75%),linear-gradient(45deg,#d4d0c8 25%,transparent 25%,transparent 75%,#d4d0c8 75%);background-size:2px 2px;background-position:0 0,1px 1px;"></div>
<div class="raised" style="left:5px;top:428px;width:20px;height:17px;"></div>
<div class="raised" style="left:25px;top:428px;width:50px;height:17px;"></div>
<div class="raised" style="left:75px;top:428px;width:20px;height:17px;"></div>
<div class="raised" style="left:95px;top:428px;width:16px;height:18px;"></div>
<div class="raised" style="left:137px;top:428px;width:30px;height:18px;"></div>
<div class="raised" style="left:619px;top:428px;width:16px;height:18px;"></div>
<svg style="left:8px;top:430px" width="14" height="14" viewBox="0 0 14 14"><circle cx="7" cy="7" r="5.8" fill="#f0f0f0" stroke="#000" stroke-width="0.9"/><rect x="3.5" y="6" width="7" height="2" fill="#1010a0"/></svg>
<svg style="left:78px;top:430px" width="14" height="14" viewBox="0 0 14 14"><circle cx="7" cy="7" r="5.8" fill="#f0f0f0" stroke="#000" stroke-width="0.9"/><path d="M4 7H10M7 4V10" stroke="#a00000" stroke-width="2"/></svg>
<div class="t" style="left:25px;width:50px;text-align:center;top:430px;font-size:11px;padding-right:3px;box-sizing:border-box">2</div>
<svg style="left:100px;top:433px" width="5" height="8" viewBox="0 0 5 8"><path d="M4.5 0 L4.5 8 L0 4Z" fill="#000"/></svg>
<svg style="left:625px;top:433px" width="5" height="8" viewBox="0 0 5 8"><path d="M0.5 0 L5 4 L0.5 8Z" fill="#000"/></svg>
<div class="a" style="left:194px;top:450px;width:252px;height:8px;box-sizing:border-box;border:1px solid #808080;background:#d4d0c8"></div>
<div class="a" style="left:209px;top:453px;width:221px;height:1px;background:repeating-linear-gradient(90deg,#1c3a9c 0,#1c3a9c 1.2px,transparent 1.2px,transparent 3px);opacity:.9"></div>
<svg style="left:200px;top:452px" width="6" height="4" viewBox="0 0 6 4"><path d="M3 0 L6 3.5 L0 3.5Z" fill="#0a246a"/></svg>
<svg style="left:435px;top:452px" width="6" height="4" viewBox="0 0 6 4"><path d="M3 0 L6 3.5 L0 3.5Z" fill="#0a246a"/></svg>
<div class="a" style="left:5px;top:459px;width:630px;height:16px;box-sizing:border-box;border:1px solid #9a9a96;border-radius:1.5px;"></div>
<svg style="left:622px;top:462px" width="12" height="12" viewBox="0 0 12 12"><rect x="9" y="1" width="2" height="2" fill="#fff"/><rect x="8" y="0" width="2" height="2" fill="#85827c"/><rect x="5" y="5" width="2" height="2" fill="#fff"/><rect x="4" y="4" width="2" height="2" fill="#85827c"/><rect x="9" y="5" width="2" height="2" fill="#fff"/><rect x="8" y="4" width="2" height="2" fill="#85827c"/><rect x="1" y="9" width="2" height="2" fill="#fff"/><rect x="0" y="8" width="2" height="2" fill="#85827c"/><rect x="5" y="9" width="2" height="2" fill="#fff"/><rect x="4" y="8" width="2" height="2" fill="#85827c"/><rect x="9" y="9" width="2" height="2" fill="#fff"/><rect x="8" y="8" width="2" height="2" fill="#85827c"/></svg>
<div class="a" style="left:66px;top:201px;width:492px;height:166px;box-sizing:border-box;background:#d4d0c8;border:1px solid;border-color:#d4d0c8 #404040 #404040 #d4d0c8;box-shadow:inset 1px 1px 0 #fff, inset -1px -1px 0 #808080;"></div>
<div class="a" style="left:69px;top:204px;width:486px;height:18px;background:linear-gradient(90deg,#0a246a,#a6caf0);"></div>
<svg style="left:72px;top:205px" width="16" height="17" viewBox="0 0 16 17"><path d="M0.5 0.5 H11.5 V14.5 H0.5Z" fill="#fdfdff" stroke="#c8d0e8"/><path d="M2 3.5H5M3 5.5H8M3 7.5H6M4 9.5H5M3 11.5H5" stroke="#2858e0" stroke-width="1"/><circle cx="10.5" cy="11.5" r="3.4" fill="none" stroke="#8880cc" stroke-width="2.4" stroke-dasharray="1.6 1.1"/><circle cx="10.5" cy="11.5" r="2.6" fill="#a8a4e0" stroke="#7870c0" stroke-width="0.8"/><circle cx="10.5" cy="11.5" r="1" fill="#e8e8ff"/></svg>
<div class="t b" style="left:88px;top:207px;color:#fff;letter-spacing:-0.13px">Настройка параметров точки</div>
<div class="raised" style="left:537px;top:206px;width:16px;height:14px;"></div>
<svg style="left:541px;top:209px" width="8" height="7" viewBox="0 0 8 7"><path d="M0.5 0 L7.5 7 M7.5 0 L0.5 7" stroke="#000" stroke-width="1.6"/></svg>
<div class="t b" style="left:74px;top:229px;color:#000080;letter-spacing:0.08px">Показывать</div>
<div class="a" style="left:153px;top:235px;width:125px;height:1px;background:#a0a0a0;"></div>
<div class="chk" style="left:78px;top:246px"><svg width="11" height="11" viewBox="0 0 11 11" style="left:0;top:0"><path d="M2 5 L4.5 7.5 L9 2.5" stroke="#21a121" stroke-width="2" fill="none"/></svg></div>
<div class="t" style="left:95px;top:245px;font-size:11px;letter-spacing:-0.11px">Значение оси времени (T)</div>
<div class="chk" style="left:78px;top:266px"><svg width="11" height="11" viewBox="0 0 11 11" style="left:0;top:0"><path d="M2 5 L4.5 7.5 L9 2.5" stroke="#21a121" stroke-width="2" fill="none"/></svg></div>
<div class="t" style="left:95px;top:265px;font-size:11px;letter-spacing:0.04px">Значение оси угла поворота (A)</div>
<div class="chk" style="left:78px;top:286px"><svg width="11" height="11" viewBox="0 0 11 11" style="left:0;top:0"><path d="M2 5 L4.5 7.5 L9 2.5" stroke="#21a121" stroke-width="2" fill="none"/></svg></div>
<div class="t" style="left:95px;top:285px;font-size:11px;letter-spacing:-0.06px">Значение оси амплитуды (Z)</div>
<div class="chk" style="left:78px;top:306px"><svg width="11" height="11" viewBox="0 0 11 11" style="left:0;top:0"><path d="M2 5 L4.5 7.5 L9 2.5" stroke="#21a121" stroke-width="2" fill="none"/></svg></div>
<div class="t" style="left:95px;top:305px;font-size:11px;letter-spacing:-0.07px">Значение оси оборотов (Rpm)</div>
<div class="a" style="left:95px;top:244px;width:134px;height:17px;box-sizing:border-box;border:1px dotted #000"></div>
<div class="chk" style="left:410px;top:234px"><svg width="11" height="11" viewBox="0 0 11 11" style="left:0;top:0"><path d="M2 5 L4.5 7.5 L9 2.5" stroke="#21a121" stroke-width="2" fill="none"/></svg></div>
<div class="t" style="left:428px;top:233px;letter-spacing:-0.25px">Комментарий</div>
<div class="t" style="left:300px;width:107px;text-align:right;top:256px">Комментарий:</div>
<div class="t" style="left:300px;width:107px;text-align:right;top:281px">Местоположение:</div>
<div class="t" style="left:300px;width:107px;text-align:right;top:305px">Цвет фона точки:</div>
<div class="a" style="left:410px;top:253px;width:140px;height:21px;box-sizing:border-box;background:#fff;border:1px solid #7f9db9"></div>
<div class="a" style="left:410px;top:277px;width:140px;height:21px;box-sizing:border-box;background:#fff;border:1px solid #7f9db9"></div>
<div class="t" style="left:414px;top:281px">Вверху справа</div>
<svg style="left:537px;top:286px" width="8" height="4" viewBox="0 0 8 4"><path d="M0 0 L8 0 L4 4Z" fill="#000"/></svg>
<div class="a" style="left:410px;top:302px;width:76px;height:20px;box-sizing:border-box;background:#fff;border:1px solid #7f9db9"></div>
<div class="a" style="left:414px;top:305px;width:52px;height:13px;box-sizing:border-box;background:#fff;border:1px solid #808080"></div>
<svg style="left:472px;top:310px" width="8" height="4" viewBox="0 0 8 4"><path d="M0 0 L8 0 L4 4Z" fill="#000"/></svg>
<div class="chk" style="left:490px;top:306px"><svg width="11" height="11" viewBox="0 0 11 11" style="left:0;top:0"><path d="M2 5 L4.5 7.5 L9 2.5" stroke="#21a121" stroke-width="2" fill="none"/></svg></div>
<div class="t" style="left:508px;top:305px">Фон</div>
<div class="xpbtn" style="left:75px;top:332px;width:158px;">Использовать по умолчанию</div>
<div class="xpbtn" style="left:241px;top:332px;width:119px;">Применить ко всем</div>
<div class="xpbtn" style="left:395px;top:332px;width:73px;">OK</div>
<div class="xpbtn" style="left:476px;top:332px;width:73px;">Отмена</div>
</body></html>
